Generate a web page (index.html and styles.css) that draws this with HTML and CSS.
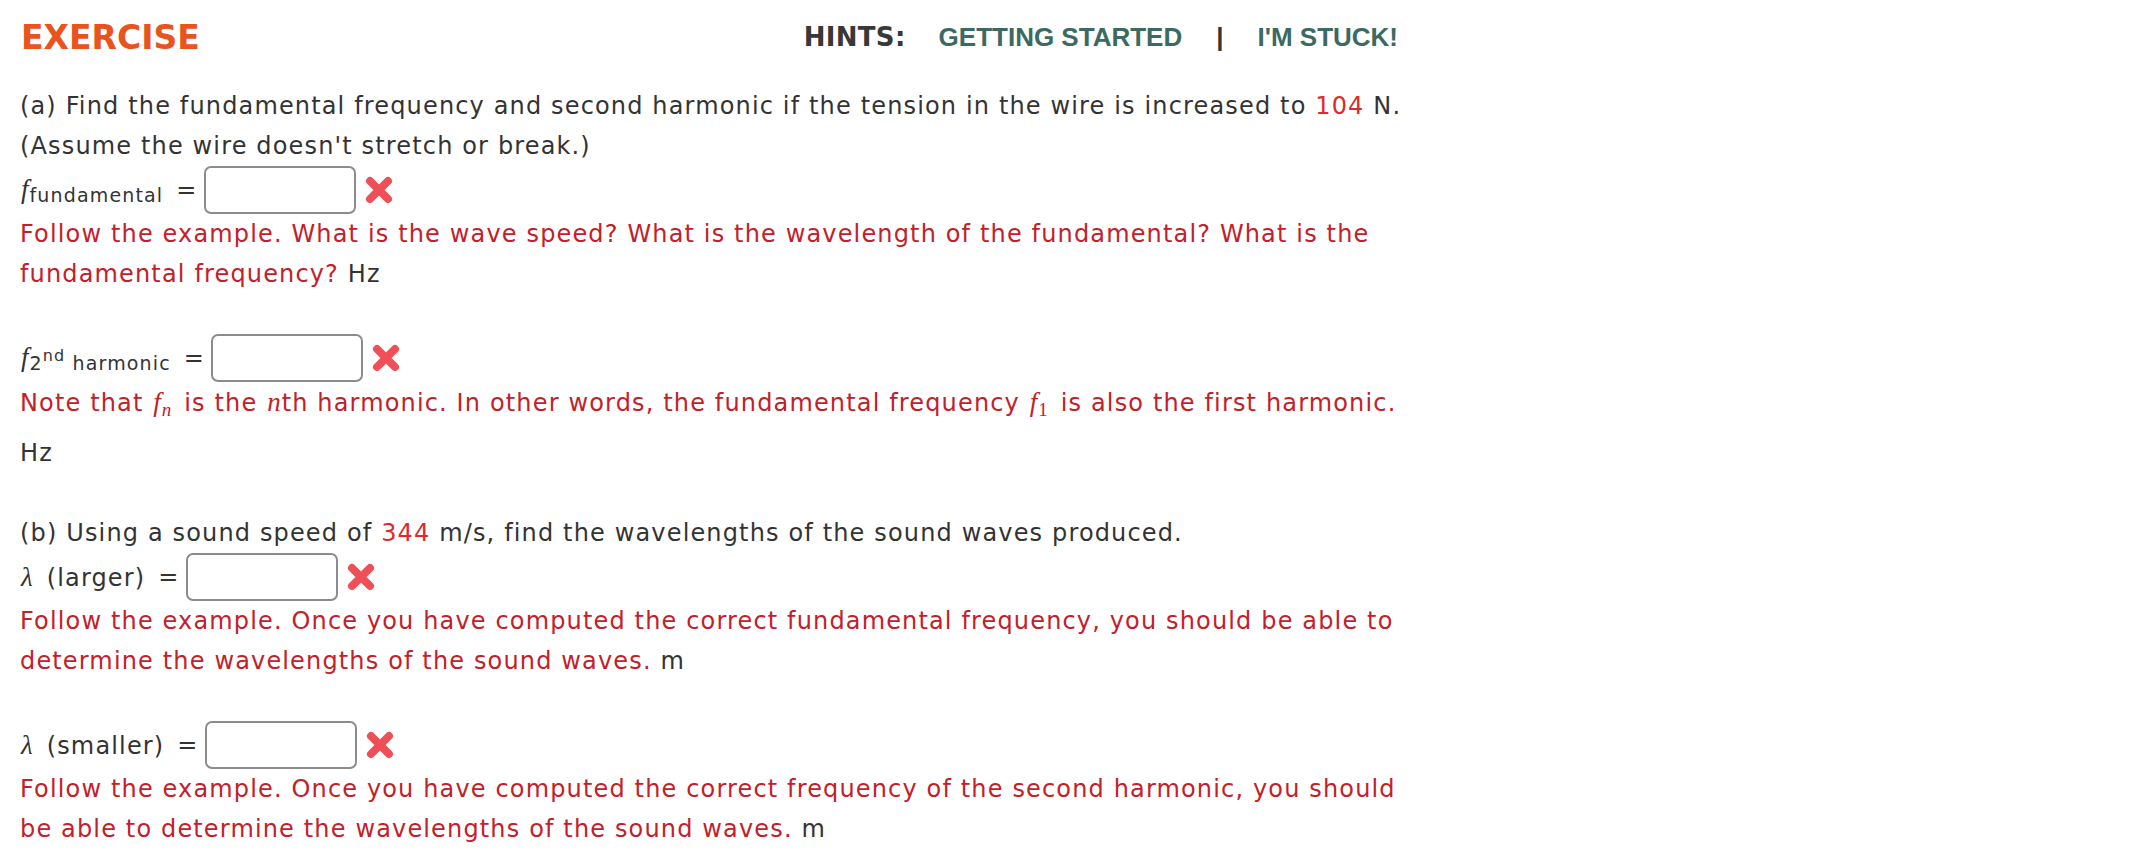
FILE: index.html
```html
<!DOCTYPE html>
<html lang="en">
<head>
    <meta charset="UTF-8">
    <meta name="viewport" content="width=device-width, initial-scale=1.0">
    <title>Exercise</title>
    <link rel="stylesheet" href="styles.css">
</head>
<body>
    <div class="page">
        <div class="top-bar">
            <span class="title">EXERCISE</span>
            <div class="hints">
                <span class="hints-label">HINTS:</span>
                <a class="hint-link" href="#">GETTING STARTED</a>
                <span class="sep">|</span>
                <a class="hint-link" href="#">I'M STUCK!</a>
            </div>
        </div>

        <div class="part">
            <p class="line">(a) Find the fundamental frequency and second harmonic if the tension in the wire is increased to <span class="given">104</span> N.</p>
            <p class="line">(Assume the wire doesn't stretch or break.)</p>

            <div class="answer-row">
                <span class="label"><i class="m">f</i><sub>fundamental</sub></span>
                <span class="eq">=</span>
                <input class="answer" type="text">
                <svg class="wrong" viewBox="0 0 34 34"><path d="M8 8 L26 26 M26 8 L8 26"/></svg>
            </div>
            <p class="feedback">Follow the example. What is the wave speed? What is the wavelength of the fundamental? What is the fundamental frequency? <span class="unit">Hz</span></p>

            <div class="answer-row gap-above">
                <span class="label"><i class="m">f</i><sub>2<sup>nd</sup> harmonic</sub></span>
                <span class="eq">=</span>
                <input class="answer" type="text">
                <svg class="wrong" viewBox="0 0 34 34"><path d="M8 8 L26 26 M26 8 L8 26"/></svg>
            </div>
            <p class="feedback">Note that <i class="m">f</i><sub class="m-sub"><i>n</i></sub> is the <i class="m">n</i>th harmonic. In other words, the fundamental frequency <i class="m">f</i><sub class="m-sub">1</sub> is also the first harmonic.</p>
            <p class="line unit-line">Hz</p>
        </div>

        <div class="part gap-above">
            <p class="line">(b) Using a sound speed of <span class="given">344</span> m/s, find the wavelengths of the sound waves produced.</p>

            <div class="answer-row">
                <span class="label"><i class="m lambda">λ</i>(larger)</span>
                <span class="eq">=</span>
                <input class="answer" type="text">
                <svg class="wrong" viewBox="0 0 34 34"><path d="M8 8 L26 26 M26 8 L8 26"/></svg>
            </div>
            <p class="feedback">Follow the example. Once you have computed the correct fundamental frequency, you should be able to determine the wavelengths of the sound waves. <span class="unit">m</span></p>

            <div class="answer-row gap-above">
                <span class="label"><i class="m lambda">λ</i>(smaller)</span>
                <span class="eq">=</span>
                <input class="answer" type="text">
                <svg class="wrong" viewBox="0 0 34 34"><path d="M8 8 L26 26 M26 8 L8 26"/></svg>
            </div>
            <p class="feedback">Follow the example. Once you have computed the correct frequency of the second harmonic, you should be able to determine the wavelengths of the sound waves. <span class="unit">m</span></p>
        </div>
    </div>
</body>
</html>
```

FILE: styles.css
```css
body {
    margin: 0;
    background: #fff;
    color: #333;
    font-family: "DejaVu Sans", Verdana, sans-serif;
    font-size: 24px;
}
.page {
    width: 1395px;
    padding: 17px 0 0 20px;
}
p {
    margin: 0;
}
.top-bar {
    display: flex;
    justify-content: space-between;
    align-items: center;
    height: 40px;
    padding-right: 17px;
}
.title {
    color: #e9531d;
    font-size: 33px;
    font-weight: bold;
    padding-left: 1px;
}
.hints {
    display: flex;
    align-items: center;
    gap: 33px;
    font-family: "Liberation Sans", Arial, sans-serif;
    font-size: 26px;
    font-weight: bold;
}
.hints-label {
    font-family: "DejaVu Sans", Verdana, sans-serif;
    font-size: 26px;
    color: #383838;
    letter-spacing: 0.3px;
}
.hint-link {
    color: #3b6a62;
    text-decoration: none;
}
.sep {
    color: #333;
    margin: 0 1px;
}
.part {
    margin-top: 29px;
    letter-spacing: 1.15px;
}
.line, .feedback {
    line-height: 40px;
}
.feedback {
    color: #c3202a;
}
.given {
    color: #dd2a2c;
}
.unit {
    color: #333;
}
.unit-line {
    margin-top: 10px;
}
.gap-above {
    margin-top: 40px;
}
.answer-row {
    display: flex;
    align-items: center;
    height: 48px;
}
.label {
    white-space: nowrap;
}
.label sub {
    font-size: 19px;
    vertical-align: -4px;
}
.label sup {
    font-size: 16px;
    vertical-align: 9px;
}
.m {
    font-family: "Liberation Serif", "Times New Roman", serif;
    font-size: 27px;
    letter-spacing: 0;
    margin: 0 1px;
}
.lambda {
    margin-right: 14px;
}
.m-sub {
    font-family: "Liberation Serif", "Times New Roman", serif;
    font-size: 19px;
    vertical-align: -5px;
    line-height: 0;
    margin-right: 3px;
}
.eq {
    margin: 0 6px 0 13px;
}
.answer {
    box-sizing: border-box;
    width: 152px;
    height: 48px;
    border: 2px solid #8c8c8c;
    border-radius: 7px;
    background: #fff;
    font: inherit;
    padding: 0 8px;
}
.wrong {
    width: 34px;
    height: 34px;
    margin-left: 6px;
}
.wrong path {
    fill: none;
    stroke: #ef5058;
    stroke-width: 8;
    stroke-linecap: round;
    filter: blur(0.7px);
}
```
